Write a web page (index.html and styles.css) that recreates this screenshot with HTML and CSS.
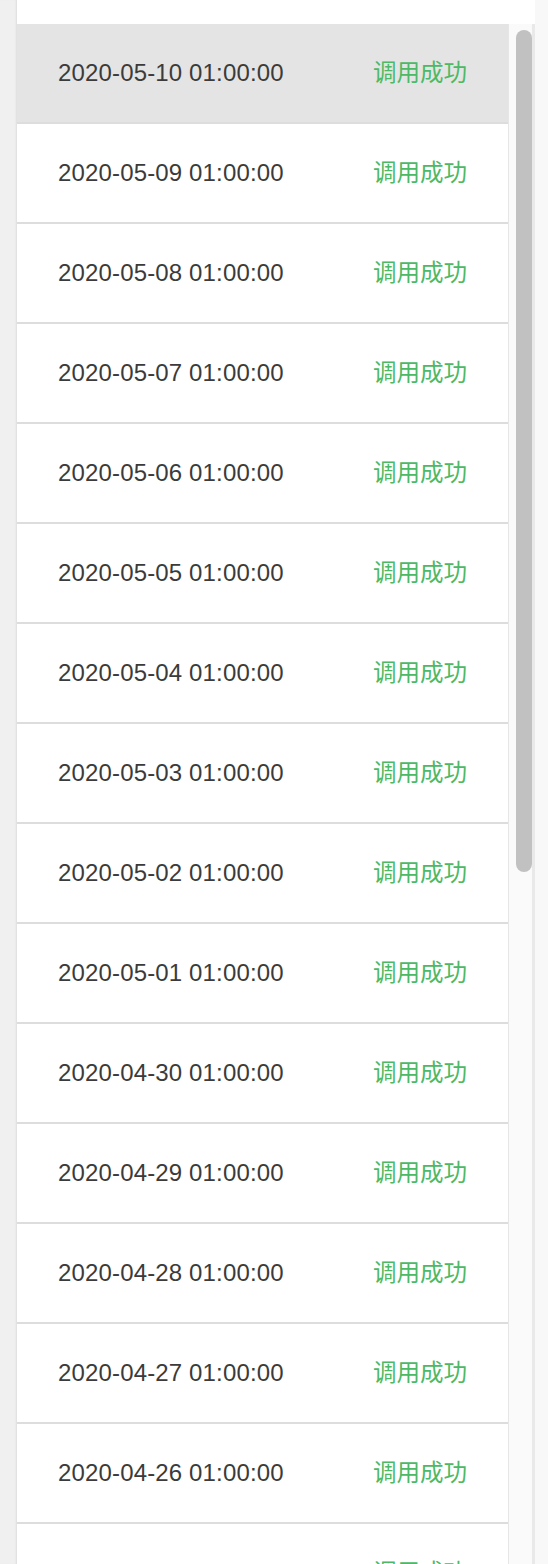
FILE: index.html
```html
<!DOCTYPE html>
<html lang="zh">
<head>
<meta charset="utf-8">
<link rel="stylesheet" href="styles.css">
</head>
<body>
<div class="page">
  <div class="gutter"></div>
  <div class="panel">
    <div class="panel-top"></div>
    <div class="panel-body">
      <ul class="list">
        <li class="row active"><span class="time">2020-05-10 01:00:00</span><span class="status">调用成功</span></li>
        <li class="row"><span class="time">2020-05-09 01:00:00</span><span class="status">调用成功</span></li>
        <li class="row"><span class="time">2020-05-08 01:00:00</span><span class="status">调用成功</span></li>
        <li class="row"><span class="time">2020-05-07 01:00:00</span><span class="status">调用成功</span></li>
        <li class="row"><span class="time">2020-05-06 01:00:00</span><span class="status">调用成功</span></li>
        <li class="row"><span class="time">2020-05-05 01:00:00</span><span class="status">调用成功</span></li>
        <li class="row"><span class="time">2020-05-04 01:00:00</span><span class="status">调用成功</span></li>
        <li class="row"><span class="time">2020-05-03 01:00:00</span><span class="status">调用成功</span></li>
        <li class="row"><span class="time">2020-05-02 01:00:00</span><span class="status">调用成功</span></li>
        <li class="row"><span class="time">2020-05-01 01:00:00</span><span class="status">调用成功</span></li>
        <li class="row"><span class="time">2020-04-30 01:00:00</span><span class="status">调用成功</span></li>
        <li class="row"><span class="time">2020-04-29 01:00:00</span><span class="status">调用成功</span></li>
        <li class="row"><span class="time">2020-04-28 01:00:00</span><span class="status">调用成功</span></li>
        <li class="row"><span class="time">2020-04-27 01:00:00</span><span class="status">调用成功</span></li>
        <li class="row"><span class="time">2020-04-26 01:00:00</span><span class="status">调用成功</span></li>
        <li class="row"><span class="time">2020-04-25 01:00:00</span><span class="status">调用成功</span></li>
      </ul>
      <div class="scrollbar"><div class="thumb"></div></div>
    </div>
  </div>
  <div class="edge"></div>
</div>
</body>
</html>
```

FILE: styles.css
```css
html, body {
  margin: 0;
  padding: 0;
  height: 1564px;
  overflow: hidden;
  background: #f8f8f8;
  font-family: "Liberation Sans", Arial, "Noto Sans CJK SC", sans-serif;
}
.page {
  display: flex;
  height: 1564px;
}
.gutter {
  width: 17px;
  flex: none;
  background: #f0f0f0;
  box-shadow: inset -2px 0 2px -1px #dedede;
}
.panel {
  width: 518px;
  flex: none;
  display: flex;
  flex-direction: column;
  background: #fff;
}
.panel-top {
  height: 24px;
  flex: none;
  background: #fff;
}
.panel-body {
  flex: 1;
  display: flex;
  min-height: 0;
  overflow: hidden;
}
.list {
  list-style: none;
  margin: 0;
  padding: 0;
  width: 491px;
  flex: none;
}
.row {
  height: 98px;
  border-bottom: 2px solid #dddddd;
  display: flex;
  align-items: center;
  justify-content: space-between;
  padding: 0 41px;
  background: #fff;
  box-sizing: content-box;
}
.row.active {
  background: #e4e4e4;
}
.time {
  font-size: 24px;
  color: #3b3b3b;
  letter-spacing: 0.15px;
  padding-bottom: 1px;
}
.status {
  font-size: 23.5px;
  color: #4cb964;
  font-family: "Noto Sans CJK SC", sans-serif;
  padding-bottom: 4px;
}
.scrollbar {
  flex: 1;
  background: #fafafa;
  border-left: 1px solid #e6e6e6;
  border-right: 3px solid #e9e9e9;
  padding: 6px 0 0 7px;
}
.thumb {
  width: 16px;
  height: 842px;
  border-radius: 8px;
  background: #c1c1c1;
}
.edge {
  flex: 1;
  background: #f8f8f8;
}
```
